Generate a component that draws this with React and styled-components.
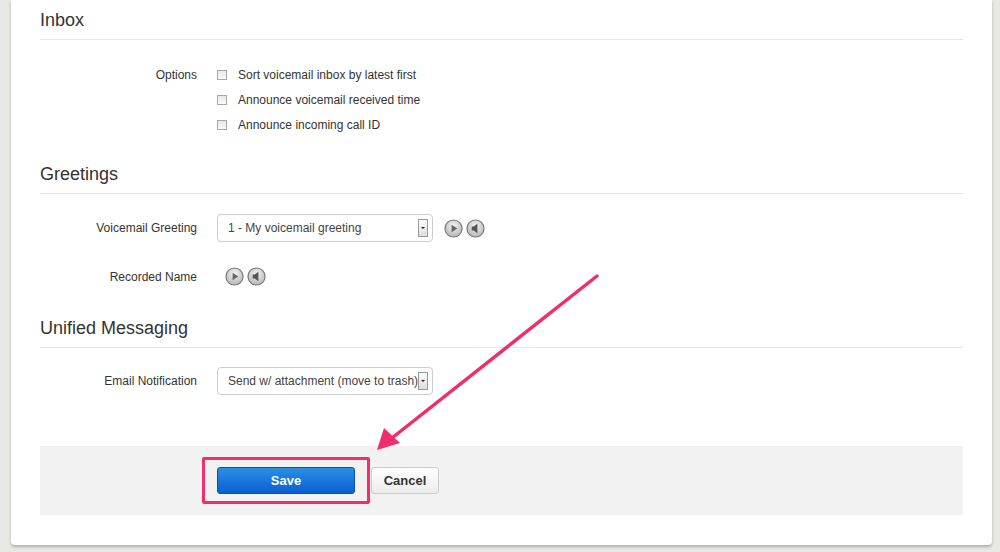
import React from "react";
import styled, { createGlobalStyle } from "styled-components";

const Global = createGlobalStyle`
  html, body { margin: 0; padding: 0; background: #e9e9e4; }
  body { font-family: "Liberation Sans", Arial, sans-serif; color: #333; }
`;

const Page = styled.div`
  width: 1000px; height: 552px; box-sizing: border-box;
  padding: 0 8px 7px 11px; position: relative; overflow: hidden;
`;
const Card = styled.div`
  background: #fff; height: 545px; box-sizing: border-box;
  padding: 0 29px 0 29px; border-radius: 0 0 4px 4px;
  box-shadow: 0 2px 3px rgba(0,0,0,0.25);
  display: flex; flex-direction: column;
`;
const Section = styled.div`
  height: ${p => p.h}px; display: flex; flex-direction: column; flex-shrink: 0;
`;
const Title = styled.div`
  height: ${p => p.top}px; box-sizing: border-box; display: flex; align-items: flex-end;
  font-size: 18px; color: #333; padding-bottom: 8px;
  border-bottom: 1px solid #e6e6e6;
`;
const Row = styled.div`
  display: flex; align-items: ${p => p.al || "center"};
  margin-top: ${p => p.mt || 0}px;
`;
const Label = styled.div`
  width: 157px; text-align: right; font-size: 12px; color: #333;
  padding-right: 20px; padding-top: ${p => p.pt || 0}px;
`;
const Checks = styled.div`
  display: flex; flex-direction: column; gap: 11px; padding-top: 2px;
`;
const Check = styled.label`
  display: flex; align-items: center; font-size: 12px; color: #333; height: 14px;
`;
const Box = styled.span`
  width: 8px; height: 8px; border: 1px solid #a8a8a8;
  background: linear-gradient(#e8e8e8, #fafafa); margin-right: 11px;
`;
const Select = styled.div`
  width: ${p => p.w}px; height: 28px; box-sizing: border-box;
  border: 1px solid #ccc; border-radius: 4px; display: flex; align-items: center;
  padding: 0 4px 0 10px; font-size: 12px; color: #444; justify-content: space-between;
  white-space: nowrap; overflow: hidden;
`;
const Arrow = styled.span`
  width: 10px; height: 18px; flex-shrink: 0; border: 1px solid #999; box-sizing: border-box;
  background: linear-gradient(#fdfdfd, #ddd); display: flex; align-items: center; justify-content: center;
  &::after { content: ""; border: 2px solid transparent; border-top: 2px solid #222; margin-top: 2px; }
`;
const Icons = styled.div`
  display: flex; gap: 3px; margin-left: ${p => p.ml}px;
`;
const Footer = styled.div`
  margin-top: auto; margin-bottom: 30px; height: 69px; background: #f2f2f2;
  display: flex; align-items: center; padding-left: 162px;
`;
const Highlight = styled.div`
  border: 3px solid #f0306e; padding: 7px 12px; border-radius: 2px;
`;
const Save = styled.button`
  width: 138px; height: 27px; border: 1px solid #0c4fb0; border-radius: 3px;
  background: linear-gradient(#2b8fe3, #0a5ed0); color: #fff; font-weight: bold;
  font-family: inherit; font-size: 13px; display: block;
`;
const Cancel = styled.button`
  height: 27px; width: 68px; margin-left: 1px; border: 1px solid #ccc; border-radius: 3px;
  background: linear-gradient(#fff, #ececec); color: #333; font-weight: bold;
  font-family: inherit; font-size: 13px;
`;
const Overlay = styled.svg`
  position: absolute; left: 0; top: 0; pointer-events: none;
`;

const Play = () => (
  <svg width="19" height="19" viewBox="0 0 20 20">
    <defs><radialGradient id="g" cx="50%" cy="35%" r="65%"><stop offset="0" stopColor="#f4f4f4"/><stop offset="1" stopColor="#b5b5b5"/></radialGradient></defs>
    <circle cx="10" cy="10" r="9" fill="url(#g)" stroke="#777" strokeWidth="1.2"/>
    <path d="M8 6 L14 10 L8 14 Z" fill="#666"/>
  </svg>
);
const Speaker = () => (
  <svg width="19" height="19" viewBox="0 0 20 20">
    <circle cx="10" cy="10" r="9" fill="url(#g)" stroke="#777" strokeWidth="1.2"/>
    <path d="M6 8 H8 L12 5 V15 L8 12 H6 Z" fill="#555"/>
  </svg>
);

export default function App() {
  return (
    <Page>
      <Global />
      <Card>
        <Section h={152}>
          <Title top={40}>Inbox</Title>
          <Row al="flex-start" mt={26}>
            <Label pt={2}>Options</Label>
            <Checks>
              <Check><Box />Sort voicemail inbox by latest first</Check>
              <Check><Box />Announce voicemail received time</Check>
              <Check><Box />Announce incoming call ID</Check>
            </Checks>
          </Row>
        </Section>
        <Section h={154}>
          <Title top={42}>Greetings</Title>
          <Row mt={20}>
            <Label>Voicemail Greeting</Label>
            <Select w={216}>1 - My voicemail greeting<Arrow /></Select>
            <Icons ml={11}><Play /><Speaker /></Icons>
          </Row>
          <Row mt={25}>
            <Label>Recorded Name</Label>
            <Icons ml={8}><Play /><Speaker /></Icons>
          </Row>
        </Section>
        <Section h={100}>
          <Title top={42}>Unified Messaging</Title>
          <Row mt={19}>
            <Label>Email Notification</Label>
            <Select w={216}>Send w/ attachment (move to trash)<Arrow /></Select>
          </Row>
        </Section>
        <Footer>
          <Highlight><Save>Save</Save></Highlight>
          <Cancel>Cancel</Cancel>
        </Footer>
      </Card>
      <Overlay width="1000" height="552">
        <line x1="597" y1="276" x2="392" y2="438" stroke="#ee2f6c" strokeWidth="3.5" strokeLinecap="round"/>
        <path d="M377 450 L384 428 L400 443 Z" fill="#ee2f6c"/>
      </Overlay>
    </Page>
  );
}
